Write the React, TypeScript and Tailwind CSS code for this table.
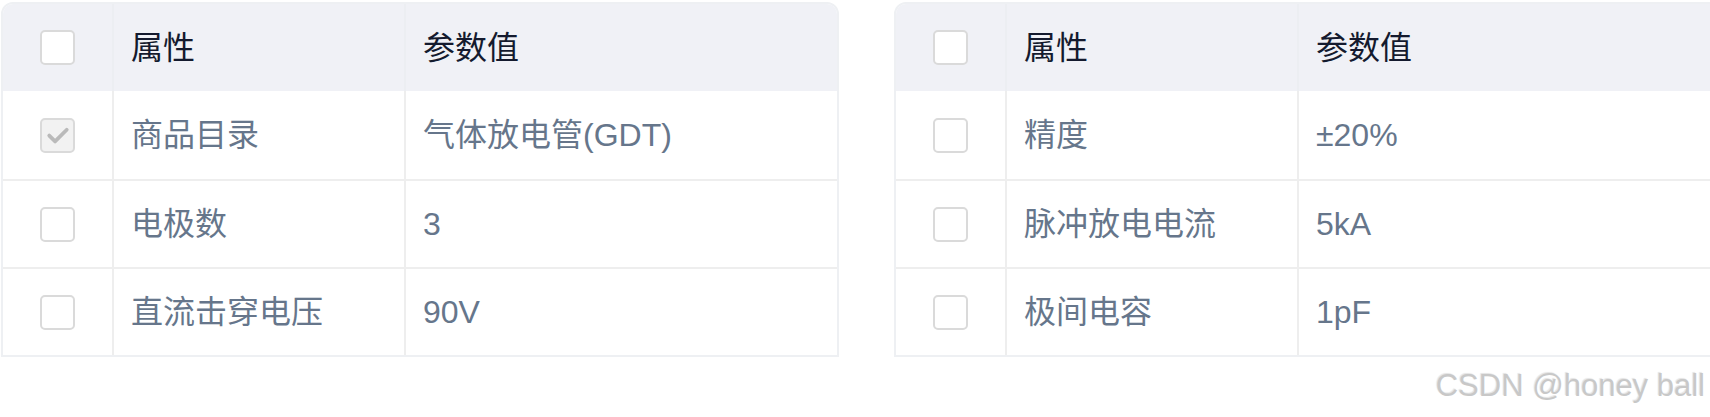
import React from "react";

type Row = { label: string; value: string; checked?: boolean };

const leftRows: Row[] = [
  { label: "商品目录", value: "气体放电管(GDT)", checked: true },
  { label: "电极数", value: "3" },
  { label: "直流击穿电压", value: "90V" },
];

const rightRows: Row[] = [
  { label: "精度", value: "±20%" },
  { label: "脉冲放电电流", value: "5kA" },
  { label: "极间电容", value: "1pF" },
];

function Checkbox({ checked }: { checked?: boolean }) {
  if (checked) {
    return (
      <div className="w-[35px] h-[35px] rounded-[5px] border-2 border-[#dadada] bg-[#f2f2f2] flex items-center justify-center">
        <svg width="28" height="28" viewBox="0 0 24 24" fill="none">
          <path d="M4.5 12.5l5 5L19.5 7.5" stroke="#bababa" strokeWidth="3.2" strokeLinecap="round" strokeLinejoin="round" />
        </svg>
      </div>
    );
  }
  return <div className="w-[35px] h-[35px] rounded-[5px] border-2 border-[#dadada] bg-white" />;
}

function ParamTable({ rows }: { rows: Row[] }) {
  return (
    <div className="w-[838px] shrink-0 rounded-t-[12px] border-2 border-[#eef0f3] overflow-hidden">
      {/* header */}
      <div className="grid grid-cols-[111px_292px_1fr] h-[87px] bg-[#f0f1f6] text-[#141a2e]">
        <div className="flex items-center justify-center border-r-2 border-[#eceef2]">
          <Checkbox />
        </div>
        <div className="flex items-center pl-[17px] border-r-2 border-[#eceef2]">属性</div>
        <div className="flex items-center pl-[17px]">参数值</div>
      </div>
      {rows.map((r, i) => (
        <div
          key={r.label}
          className={`grid grid-cols-[111px_292px_1fr] h-[88px] border-[#eeeeee] text-[#66768b] ${i > 0 ? "border-t-2" : ""}`}
        >
          <div className="flex items-center justify-center border-r-2 border-[#eeeeee]">
            <Checkbox checked={r.checked} />
          </div>
          <div className="flex items-center pl-[17px] border-r-2 border-[#eeeeee]">{r.label}</div>
          <div className="flex items-center pl-[17px]">{r.value}</div>
        </div>
      ))}
    </div>
  );
}

export default function App() {
  return (
    <div
      className="relative w-[1710px] h-[417px] overflow-hidden bg-white text-[32px] leading-none"
      style={{ fontFamily: '"Liberation Sans", "Noto Sans CJK SC", sans-serif' }}
    >
      <div className="flex gap-[55px] pl-[1px] pt-[2px]">
        <ParamTable rows={leftRows} />
        <ParamTable rows={rightRows} />
      </div>
      <div
        className="absolute right-[5px] top-[370px] text-[31px] text-[#c8c8c8]"
        style={{ textShadow: "1px 1px 1px #ffffff, -1px -1px 1px #e4e4e4" }}
      >
        CSDN @honey ball
      </div>
    </div>
  );
}
